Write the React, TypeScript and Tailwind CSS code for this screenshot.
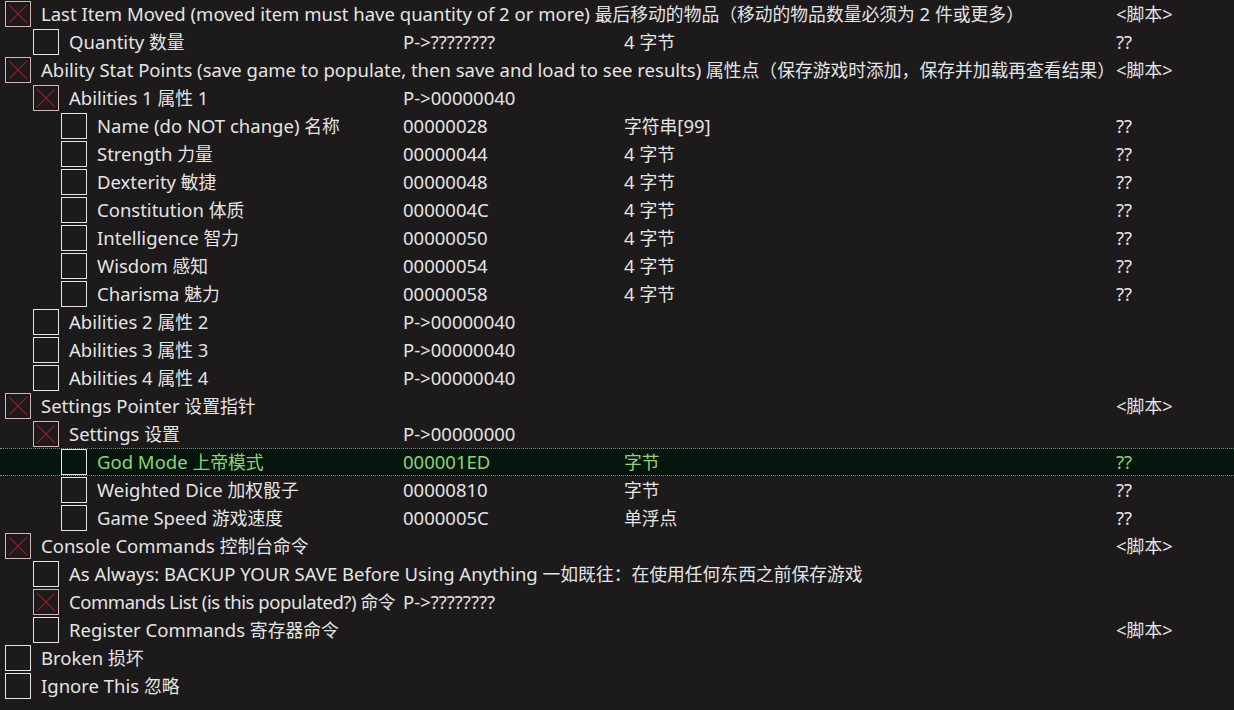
import React from "react";

type Row = {
  level: number;
  checked?: boolean;
  desc: string;
  addr?: string;
  type?: string;
  value?: string;
  hl?: boolean;
  tight?: boolean;
};

const rows: Row[] = [
  { level: 0, checked: true, desc: "Last Item Moved (moved item must have quantity of 2 or more) 最后移动的物品（移动的物品数量必须为 2 件或更多）", value: "<脚本>" },
  { level: 1, desc: "Quantity 数量", addr: "P->????????", type: "4 字节", value: "??" },
  { level: 0, checked: true, desc: "Ability Stat Points (save game to populate, then save and load to see results) 属性点（保存游戏时添加，保存并加载再查看结果）", value: "<脚本>" },
  { level: 1, checked: true, desc: "Abilities 1 属性 1", addr: "P->00000040" },
  { level: 2, desc: "Name (do NOT change) 名称", addr: "00000028", type: "字符串[99]", value: "??" },
  { level: 2, desc: "Strength 力量", addr: "00000044", type: "4 字节", value: "??" },
  { level: 2, desc: "Dexterity 敏捷", addr: "00000048", type: "4 字节", value: "??" },
  { level: 2, desc: "Constitution 体质", addr: "0000004C", type: "4 字节", value: "??" },
  { level: 2, desc: "Intelligence 智力", addr: "00000050", type: "4 字节", value: "??" },
  { level: 2, desc: "Wisdom 感知", addr: "00000054", type: "4 字节", value: "??" },
  { level: 2, desc: "Charisma 魅力", addr: "00000058", type: "4 字节", value: "??" },
  { level: 1, desc: "Abilities 2 属性 2", addr: "P->00000040" },
  { level: 1, desc: "Abilities 3 属性 3", addr: "P->00000040" },
  { level: 1, desc: "Abilities 4 属性 4", addr: "P->00000040" },
  { level: 0, checked: true, desc: "Settings Pointer 设置指针", value: "<脚本>" },
  { level: 1, checked: true, desc: "Settings 设置", addr: "P->00000000" },
  { level: 2, desc: "God Mode 上帝模式", addr: "000001ED", type: "字节", value: "??", hl: true },
  { level: 2, desc: "Weighted Dice 加权骰子", addr: "00000810", type: "字节", value: "??" },
  { level: 2, desc: "Game Speed 游戏速度", addr: "0000005C", type: "单浮点", value: "??" },
  { level: 0, checked: true, desc: "Console Commands 控制台命令", value: "<脚本>" },
  { level: 1, desc: "As Always: BACKUP YOUR SAVE Before Using Anything 一如既往：在使用任何东西之前保存游戏" },
  { level: 1, checked: true, desc: "Commands List (is this populated?) 命令", addr: "P->????????", tight: true },
  { level: 1, desc: "Register Commands 寄存器命令", value: "<脚本>" },
  { level: 0, desc: "Broken 损坏" },
  { level: 0, desc: "Ignore This 忽略" },
];

const cjkRe = /([\u3000-\u303f\u4e00-\u9fff\uff00-\uffef]+)/;

function Mixed({ text }: { text: string }) {
  const parts = text.split(cjkRe).filter((p) => p.length > 0);
  return (
    <>
      {parts.map((p, i) =>
        cjkRe.test(p) ? (
          <span key={i} className="text-[17.8px]">
            {p}
          </span>
        ) : (
          <span key={i}>{p}</span>
        )
      )}
    </>
  );
}

function Box({ checked }: { checked?: boolean }) {
  if (checked) {
    return (
      <div className="w-[26px] h-[26px] shrink-0 border border-[#d4b4b6] relative">
        <svg className="absolute inset-0" width="24" height="24" viewBox="0 0 24 24">
          <line x1="3" y1="3" x2="21" y2="21" stroke="#8e1822" strokeWidth="1.3" />
          <line x1="21" y1="3" x2="3" y2="21" stroke="#8e1822" strokeWidth="1.3" />
        </svg>
      </div>
    );
  }
  return <div className="w-[26px] h-[26px] shrink-0 border border-[#e4e4e4]" />;
}

const indent = ["pl-[5px]", "pl-[33px]", "pl-[61px]"];

export default function App() {
  return (
    <div
      className="w-[1234px] h-[710px] bg-[#1c1a1a] text-[#e4e4e4] text-[18.5px] overflow-hidden"
      style={{ fontFamily: '"Noto Sans", "Noto Sans CJK SC", sans-serif' }}
    >
      {rows.map((r, i) => (
        <div
          key={i}
          className={
            "flex items-center h-[28px] whitespace-nowrap " +
            (r.hl
              ? "bg-[#06150e] text-[#8dd46c] border-y border-dotted border-[#6e9c7c]"
              : "")
          }
        >
          <div
            className={
              "flex items-center gap-[10px] w-[400px] mr-[3px] shrink-0 " +
              indent[r.level]
            }
          >
            <Box checked={r.checked} />
            <span className={"leading-none " + (r.tight ? "tracking-[-0.45px]" : "")}>
              <Mixed text={r.desc} />
            </span>
          </div>
          <div className="w-[221px] shrink-0">
            {r.addr && <Mixed text={r.addr} />}
          </div>
          <div className="w-[492px] shrink-0">
            {r.type && <Mixed text={r.type} />}
          </div>
          <div className="shrink-0">{r.value && <Mixed text={r.value} />}</div>
        </div>
      ))}
    </div>
  );
}
